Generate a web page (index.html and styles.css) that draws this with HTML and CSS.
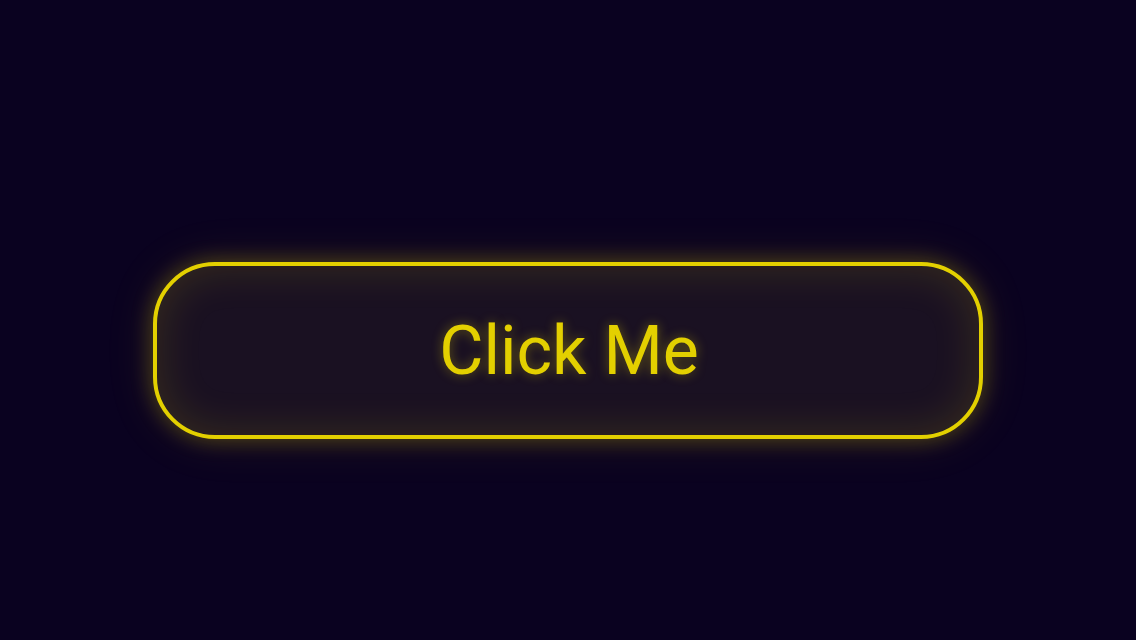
FILE: index.html
```html
<!DOCTYPE html>
<html>
<head>
<meta charset="utf-8">
<link rel="stylesheet" href="styles.css">
</head>
<body>
<main class="stage">
  <button class="neon-btn">Click Me</button>
</main>
</body>
</html>
```
FILE: styles.css
```css
html, body {
  margin: 0;
  padding: 0;
  background: #0a0220;
  height: 100%;
}
.stage {
  height: 640px;
  box-sizing: border-box;
  display: flex;
  justify-content: center;
  align-items: flex-start;
  padding-top: 262px;
}
.neon-btn {
  width: 830px;
  height: 177px;
  box-sizing: border-box;
  border: 4px solid #e3d000;
  border-radius: 62px;
  background: #1a1122;
  color: #e3d000;
  font-family: Roboto, "Liberation Sans", sans-serif;
  font-size: 68px;
  font-weight: 400;
  padding: 0 0 0 2px;
  box-shadow: 0 0 22px rgba(227, 208, 0, 0.3), 0 0 50px rgba(227, 208, 0, 0.12), inset 0 0 45px rgba(227, 208, 0, 0.16);
  text-shadow: 0 0 12px rgba(227, 208, 0, 0.4);
  cursor: pointer;
}
```
